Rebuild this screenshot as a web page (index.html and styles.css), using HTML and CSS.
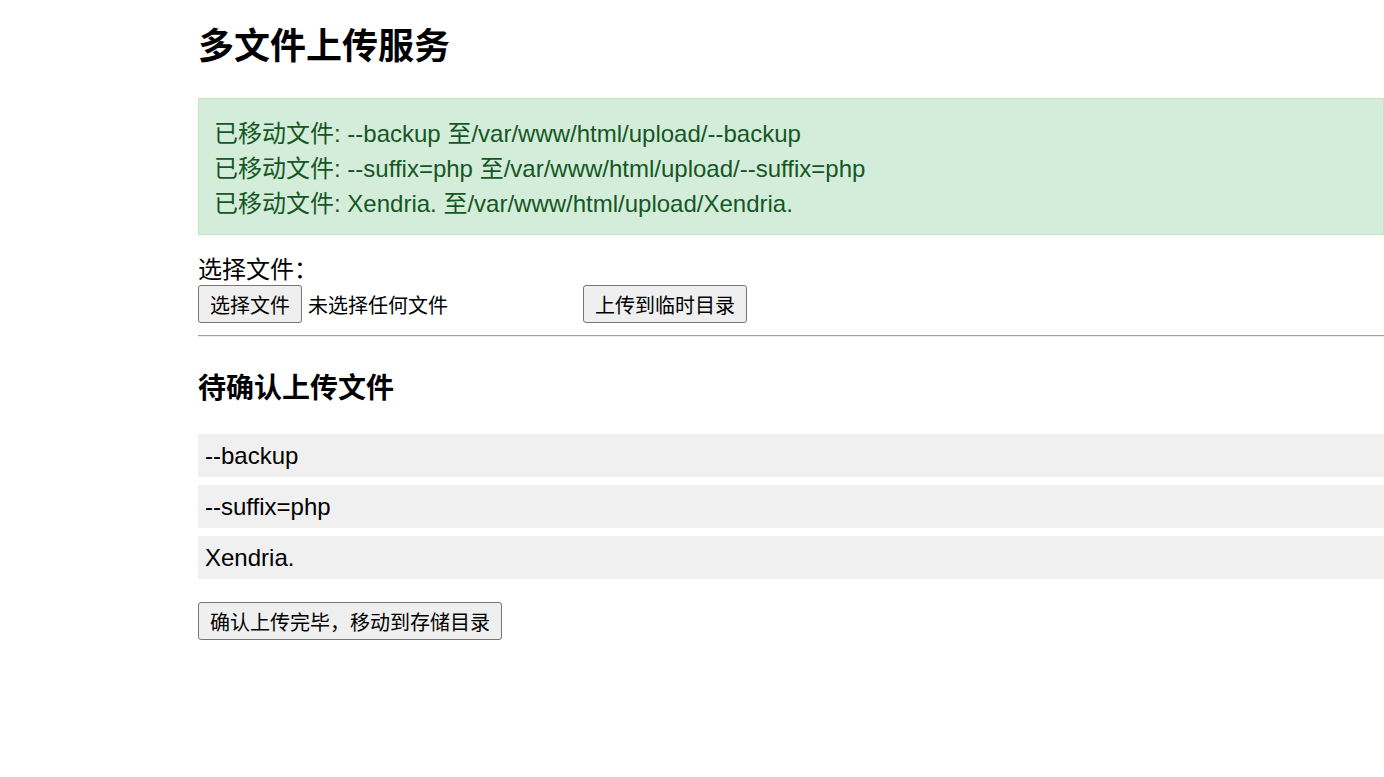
FILE: index.html
```html
<!DOCTYPE html>
<html lang="zh-CN">
<head>
    <meta charset="UTF-8">
    <meta name="viewport" content="width=device-width, initial-scale=1.0">
    <title>多文件上传服务</title>
    <link rel="stylesheet" href="styles.css">
</head>
<body>
    <div class="container">
        <h1>多文件上传服务</h1>

        <div class="message">
            已移动文件: --backup 至/var/www/html/upload/--backup<br>
            已移动文件: --suffix=php 至/var/www/html/upload/--suffix=php<br>
            已移动文件: Xendria. 至/var/www/html/upload/Xendria.<br>
        </div>

        <form class="upload-form" method="post" enctype="multipart/form-data">
            <label class="field-label" for="files">选择文件：</label>
            <div class="upload-row">
                <div class="file-picker">
                    <input type="file" id="files" name="files[]" multiple>
                    <label class="btn" for="files">选择文件</label>
                    <span class="file-name">未选择任何文件</span>
                </div>
                <button type="submit" class="btn" name="upload">上传到临时目录</button>
            </div>
        </form>

        <hr>

        <h2>待确认上传文件</h2>
        <ul class="file-list">
            <li>--backup</li>
            <li>--suffix=php</li>
            <li>Xendria.</li>
        </ul>

        <form method="post">
            <button type="submit" class="btn" name="confirm">确认上传完毕，移动到存储目录</button>
        </form>
    </div>
</body>
</html>
```

FILE: styles.css
```css
body {
    font-family: "Liberation Sans", Arial, "Noto Sans CJK SC", sans-serif;
    margin: 0;
    color: #000;
    background: #fff;
}
.container {
    margin-left: 198px;
}
h1 {
    font-size: 36px;
    margin: 17px 0 29px 0;
}
h2 {
    font-size: 28px;
    margin: 29px 0 28px 0;
}
.message {
    background: #d4edda;
    color: #155724;
    border: 1px solid #c3e6cb;
    padding: 15px 15px;
    font-size: 24px;
}
.upload-form {
    margin-top: 16px;
}
.field-label {
    display: block;
    font-size: 24px;
    line-height: 30px;
    padding-top: 4px;
}
.upload-row {
    display: flex;
    align-items: center;
    gap: 4px;
}
.file-picker {
    display: flex;
    align-items: center;
    gap: 6px;
    width: 381px;
    font-size: 20px;
}
.file-picker input[type="file"] {
    display: none;
}
.btn {
    box-sizing: border-box;
    display: inline-flex;
    align-items: center;
    height: 38px;
    font-family: inherit;
    font-size: 20px;
    padding: 0 11px;
    background: #efefef;
    border: 1px solid #767676;
    border-radius: 3px;
    color: #000;
    cursor: default;
}
hr {
    border: 0;
    border-top: 1px solid #a0a0a0;
    border-bottom: 1px solid #eeeeee;
    margin: 12px 0 0 0;
}
.file-list {
    list-style: none;
    padding: 0;
    margin: 0 0 23px 0;
}
.file-list li {
    background: #f0f0f0;
    font-size: 24px;
    line-height: 29px;
    padding: 7px;
    margin-bottom: 8px;
}
```
